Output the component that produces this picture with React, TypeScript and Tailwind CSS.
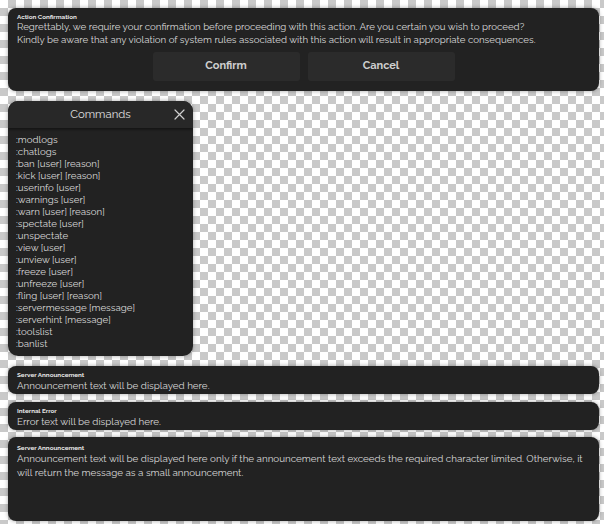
import React from "react";

const commands = [
  ":modlogs",
  ":chatlogs",
  ":ban [user] [reason]",
  ":kick [user] [reason]",
  ":userinfo [user]",
  ":warnings [user]",
  ":warn [user] [reason]",
  ":spectate [user]",
  ":unspectate",
  ":view [user]",
  ":unview [user]",
  ":freeze [user]",
  ":unfreeze [user]",
  ":fling [user] [reason]",
  ":servermessage [message]",
  ":serverhint [message]",
  ":toolslist",
  ":banlist",
];

const font = "font-['Raleway','Lato','Noto_Sans',sans-serif]";

export default function App() {
  return (
    <div
      className={`w-[604px] h-[524px] overflow-hidden bg-[image:conic-gradient(#c9c9c9_25%,#ffffff_0_50%,#c9c9c9_0_75%,#ffffff_0)] bg-[length:16px_16px] px-[8px] pt-[8px] flex flex-col ${font}`}
    >
      {/* Action Confirmation */}
      <div className="w-[591px] h-[83px] bg-[#222222] rounded-[8px] shadow-[0_0_4px_rgba(0,0,0,0.35)] px-[9px] pt-[5px] flex flex-col">
        <div className="text-[6.3px] leading-[7px] font-bold text-[#e6e6e6]">Action Confirmation</div>
        <div className="text-[9.7px] leading-[13px] text-[#d8d8d8] whitespace-nowrap">
          Regrettably, we require your confirmation before proceeding with this action. Are you certain you wish to proceed?
          <br />
          Kindly be aware that any violation of system rules associated with this action will result in appropriate consequences.
        </div>
        <div className="flex justify-center gap-[8px] mt-[6px]">
          <button className="w-[147px] h-[29px] rounded-[3px] bg-[#2b2b2b] text-[#cfcfcf] text-[11px] font-bold">Confirm</button>
          <button className="w-[147px] h-[29px] rounded-[3px] bg-[#2b2b2b] text-[#cfcfcf] text-[11px] font-bold">Cancel</button>
        </div>
      </div>

      {/* Commands */}
      <div className="mt-[10px] w-[185px] h-[255px] bg-[#222222] rounded-[10px] shadow-[0_0_4px_rgba(0,0,0,0.35)] overflow-hidden flex flex-col">
        <div className="h-[27px] shrink-0 bg-[#282828] shadow-[0_2px_2px_rgba(0,0,0,0.35)] relative flex items-center justify-center">
          <span className="text-[11.3px] text-[#e0e0e0]">Commands</span>
          <svg className="absolute right-[8px] top-[8px]" width="11" height="11" viewBox="0 0 11 11">
            <path d="M1 1L10 10M10 1L1 10" stroke="#d0d0d0" strokeWidth="1.2" strokeLinecap="round" />
          </svg>
        </div>
        <div className="pt-[6px] pl-[8px] flex flex-col">
          {commands.map((c) => (
            <div key={c} className="text-[9.7px] leading-[12px] text-[#d8d8d8] whitespace-nowrap">
              {c}
            </div>
          ))}
        </div>
      </div>

      {/* Server Announcement small */}
      <div className="mt-[10px] w-[591px] h-[28px] bg-[#222222] rounded-[8px] shadow-[0_0_4px_rgba(0,0,0,0.35)] px-[9px] pt-[5px] flex flex-col">
        <div className="text-[6.3px] leading-[7px] font-bold text-[#e6e6e6]">Server Announcement</div>
        <div className="text-[9.8px] leading-[13px] text-[#d8d8d8] mt-[1px]">Announcement text will be displayed here.</div>
      </div>

      {/* Internal Error */}
      <div className="mt-[8px] w-[591px] h-[28px] bg-[#222222] rounded-[8px] shadow-[0_0_4px_rgba(0,0,0,0.35)] px-[9px] pt-[5px] flex flex-col">
        <div className="text-[6.3px] leading-[7px] font-bold text-[#e6e6e6]">Internal Error</div>
        <div className="text-[9.8px] leading-[13px] text-[#d8d8d8] mt-[1px]">Error text will be displayed here.</div>
      </div>

      {/* Server Announcement large */}
      <div className="mt-[7px] w-[591px] h-[84px] bg-[#222222] rounded-[8px] shadow-[0_0_4px_rgba(0,0,0,0.35)] px-[9px] pt-[7px] flex flex-col">
        <div className="text-[6.3px] leading-[7px] font-bold text-[#e6e6e6]">Server Announcement</div>
        <div className="text-[9.8px] leading-[14px] text-[#d8d8d8] mt-[1px] pr-[6px]">
          Announcement text will be displayed here only if the announcement text exceeds the required character limited. Otherwise, it will return the message as a small announcement.
        </div>
      </div>
    </div>
  );
}
